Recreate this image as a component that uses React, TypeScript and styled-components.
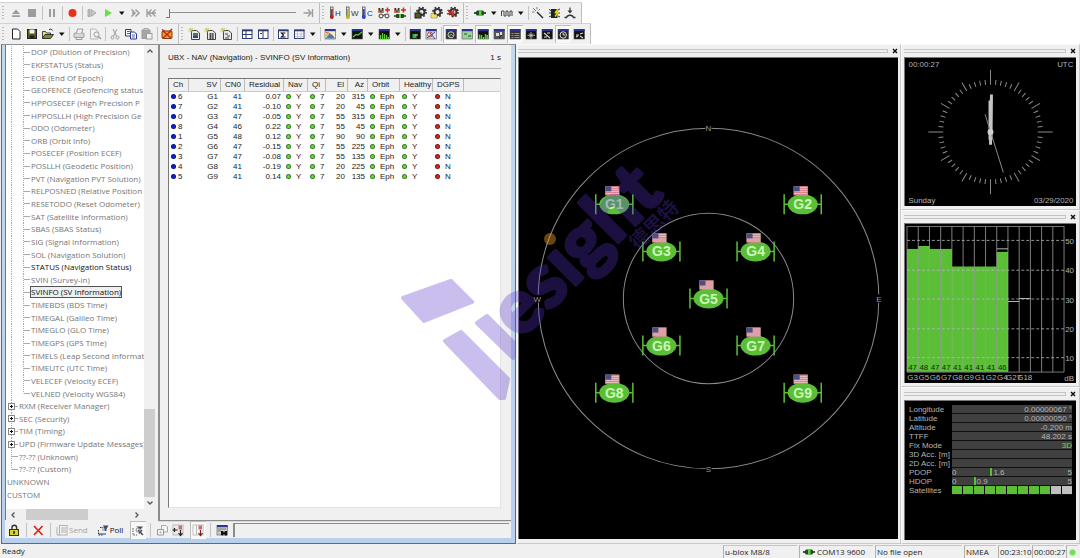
import React from "react";
import styled, { createGlobalStyle, css } from "styled-components";

const NARROW = '"Liberation Sans", Arial, sans-serif';
const UI = '"Open Sans", "Noto Sans", sans-serif';
const GREEN = "#5abf36";

const GlobalStyle = createGlobalStyle`
  * { box-sizing: border-box; }
  html, body { margin: 0; padding: 0; background: #fff; }
  body { font-family: ${UI}; font-size: 8px; line-height: 12px; color: #222; }
  button { font: inherit; color: inherit; }
  ul { list-style: none; margin: 0; padding: 0; }
`;

const Window = styled.div`
  display: flex;
  flex-direction: column;
  min-height: 100vh;
  background: #f0f0f0;
`;

/* ---------- toolbars ---------- */

const Toolbars = styled.header`
  display: flex;
  flex-direction: column;
  align-items: flex-start;
  padding-top: 2px;
  background: #fff;
`;

const ToolbarRow = styled.div`
  display: flex;
  height: 21px;
  background: #f0f0f0;
  border-top: 1px solid #d2d2d2;
`;

const Group = styled.div`
  display: flex;
  align-items: center;
  padding: 0 3px 0 2px;
  border-right: 1px solid #bdbdbd;
`;

const Grip = styled.span`
  width: 2px;
  height: 14px;
  margin-right: 4px;
  background: repeating-linear-gradient(#bbb 0 1px, transparent 1px 3px);
`;

const ToolButton = styled.button<{ $pressed?: boolean }>`
  display: flex;
  align-items: center;
  justify-content: center;
  flex: none;
  width: 16px;
  height: 18px;
  padding: 0;
  border: 0;
  background: none;
  ${(p) =>
    p.$pressed &&
    css`
      background: #f8f8f8;
      box-shadow: inset 1px 1px 0 #bdbdbd;
    `}
`;

const CaretButton = styled(ToolButton)`
  width: 11px;
`;

const Separator = styled.span`
  flex: none;
  width: 1px;
  height: 14px;
  margin: 0 1px 0 2px;
  background: #c3c3c3;
`;

const PlaybackSlider = styled.input`
  appearance: none;
  width: 130px;
  height: 16px;
  margin: 0 4px 0 7px;
  background: linear-gradient(#8f8f8f, #8f8f8f) 0 7px / 100% 1px no-repeat;
  &::-webkit-slider-thumb {
    appearance: none;
    width: 4px;
    height: 9px;
    background: #f0f0f0;
    border-right: 1px solid #777;
    border-bottom: 1px solid #777;
  }
`;

const Glyph = ({ children, size = 16 }: { children: React.ReactNode; size?: number }) => (
  <svg width={size} height="16" viewBox={`0 0 ${size} 16`} aria-hidden="true">
    {children}
  </svg>
);

const G = "#9c9c9c";

const Win = ({ children, bg = "#111" }: { children?: React.ReactNode; bg?: string }) => (
  <>
    <rect x="3" y="3.5" width="10.5" height="9.5" fill={bg} stroke="#555" strokeWidth="0.6" />
    <rect x="3" y="3" width="10.5" height="2.2" fill="#2b3590" />
    {children}
  </>
);

const Page = ({ children }: { children?: React.ReactNode }) => (
  <>
    <path d="M4.5 4.5h5l3 2.5v6.5h-8z" fill="#e9e9e9" stroke="#444" />
    <path d="M2 2l4 4M6 2L2 6M4 1.500v5M1.500 4h5" stroke="#c8c84a" strokeWidth="0.8" />
    {children}
  </>
);

const Layout = ({ children }: { children?: React.ReactNode }) => (
  <>
    <rect x="3.500" y="4" width="9.500" height="8.500" fill="#fff" stroke="#2c3c74" />
    <path d="M3 4.500h10.500" stroke="#2c3c74" strokeWidth="1.600" />
    {children}
  </>
);

const Gear = ({ children }: { children?: React.ReactNode }) => (
  <>
    <circle cx="9.500" cy="7" r="3" fill="none" stroke="#333" strokeWidth="2" />
    <circle cx="9.500" cy="7" r="4.600" fill="none" stroke="#333" strokeWidth="1.600" strokeDasharray="1.800 1.800" />
    {children}
  </>
);

const Plug = () => (
  <>
    <path d="M2 8h12" stroke="#222" strokeWidth="1.600" />
    <rect x="4" y="5.500" width="8" height="5" rx="1.500" fill="#1d4d1b" />
    <rect x="7" y="5.500" width="2.500" height="5" fill="#5fd13c" />
  </>
);

const Thermo = ({ color, letter }: { color: string; letter: string }) => (
  <>
    <rect x="2.500" y="2" width="2.600" height="9" fill="#eee" stroke="#555" strokeWidth="0.800" />
    <path d="M3.800 4v8" stroke={color} strokeWidth="1.800" />
    <circle cx="3.800" cy="12" r="2" fill={color} />
    <text x="7" y="11" fontSize="8" fontFamily="Liberation Sans" fill="#333">
      {letter}
    </text>
  </>
);

const MPlus = ({ children }: { children?: React.ReactNode }) => (
  <>
    <text x="2" y="7.500" fontSize="7" fontWeight="700" fontFamily="Liberation Sans" fill="#222">
      M
    </text>
    <path d="M9 5h5M11.500 2.500v5" stroke="#d6281c" strokeWidth="1.500" />
    {children}
  </>
);

const icons: Record<string, React.ReactNode> = {
  eject: <path d="M4 9l4-4.500 4 4.500zM4 10.300h8v1.700H4z" fill={G} />,
  stop: <rect x="4" y="4" width="8" height="8" fill={G} />,
  pause: <path d="M5 4h2v8H5zM9 4h2v8H9z" fill={G} />,
  record: <circle cx="8.500" cy="8" r="4" fill="#e8301c" />,
  step: <path d="M4 4.500h1.800v7H4zM7 4.500l5 3.500-5 3.500z" fill="#c9c9c9" stroke={G} strokeWidth="0.800" />,
  play: <path d="M5 4l7 4-7 4z" fill="#5fe536" />,
  forward: <path d="M4.500 4.500l3.500 3.500-3.500 3.500M5 8h3M8.500 4.500L12 8l-3.500 3.500" fill="none" stroke={G} strokeWidth="1.500" />,
  back: <path d="M4 4v8M8.500 4.500L5 8l3.500 3.500M12.500 4.500L9 8l3.500 3.500M6 8h7" fill="none" stroke={G} strokeWidth="1.300" />,
  end: <path d="M12.500 4v8M8 4.500L11 8l-3 3.500M3.500 8H11" fill="none" stroke={G} strokeWidth="1.400" />,
  hot: <Thermo color="#b52222" letter="H" />,
  warm: <Thermo color="#b5b52c" letter="W" />,
  cold: <Thermo color="#2e45c4" letter="C" />,
  addMsg: (
    <MPlus>
      <circle cx="5" cy="11" r="2" fill="none" stroke="#333" />
      <circle cx="11" cy="11" r="2" fill="none" stroke="#333" />
      <path d="M7 10.500l2-1" stroke="#333" />
    </MPlus>
  ),
  addPort: (
    <MPlus>
      <path d="M2 11h12" stroke="#222" strokeWidth="1.400" />
      <rect x="4" y="9" width="8" height="4" rx="1" fill="#1d4d1b" />
      <rect x="7" y="9" width="2" height="4" fill="#5fd13c" />
    </MPlus>
  ),
  gearSave: (
    <Gear>
      <rect x="3" y="8" width="6" height="5" fill="#55552a" stroke="#222" />
    </Gear>
  ),
  gearOpen: (
    <Gear>
      <path d="M3 8.500h2.500l1 1H9v3.500H3z" fill="#f3e36a" stroke="#9a8b2c" strokeWidth="0.600" />
    </Gear>
  ),
  gearClear: (
    <Gear>
      <path d="M3.500 5l7 6M3 9l6-2M9.500 4v8" stroke="#d22a20" strokeWidth="1.500" />
    </Gear>
  ),
  plug: <Plug />,
  pulse: <path d="M2.500 11V6h2.500v5h2V6h2v5h2V6h2v5" fill="none" stroke="#444" />,
  wand: (
    <>
      <path d="M7 7l6 6" stroke="#333" strokeWidth="1.500" />
      <path d="M3 3l3 3M7 2v2.500M2 7h2.500M10 4L8.500 5.500" stroke="#8a7b5c" />
    </>
  ),
  chip: (
    <>
      <rect x="5" y="4" width="6.500" height="9" fill="#222" />
      <path d="M3 4.500l2 1M3 8h2M3 12l2-1M12 5l2-1M12 8h2M12 11l2 1" stroke="#333" />
      <path d="M11.500 4.500l-2 3h2.500l-3 4" stroke="#e6d52c" strokeWidth="1.500" fill="none" />
    </>
  ),
  download: (
    <>
      <path d="M8 2.500v4" stroke="#333" strokeWidth="1.200" />
      <path d="M5.500 5.500h5L8 8.500z" fill="#333" />
      <path d="M2.500 12.500h2c1-3 6-3 7 0h2" fill="none" stroke="#333" strokeWidth="1.300" />
    </>
  ),
  newFile: <path d="M4.500 3h5l2.500 2.500V13H4.500z" fill="#fff" stroke="#222" />,
  save: (
    <>
      <rect x="3.500" y="3.500" width="9" height="9" fill="#5c5c1e" stroke="#222" />
      <rect x="5.500" y="3.500" width="5" height="4" fill="#eee" />
      <rect x="5.500" y="9.500" width="5" height="3" fill="#222" />
    </>
  ),
  open: (
    <>
      <path d="M2.500 12.500v-7h3l1 1.500h4v2" fill="#e8e07a" stroke="#444" />
      <path d="M2.500 12.500l2.500-4h8.500l-3 4z" fill="#8a8a28" stroke="#333" />
      <path d="M9 4c1-1.500 3-1 3.500.5" fill="none" stroke="#333" />
    </>
  ),
  print: (
    <>
      <rect x="3" y="7" width="10" height="4.500" rx="1" fill="#d8d8d8" stroke={G} />
      <path d="M5.500 7l1-4H12l-1.500 4M5 11.500h6v2H5z" fill="#f2f2f2" stroke={G} />
    </>
  ),
  preview: (
    <>
      <path d="M3.500 3h5l2.500 2.500V13H3.500z" fill="#f2f2f2" stroke="#b5b5b5" />
      <circle cx="9.500" cy="8.500" r="2.500" fill="#eee" stroke={G} />
      <path d="M11.500 10.500l2.500 2.500" stroke={G} strokeWidth="1.400" />
    </>
  ),
  cut: (
    <>
      <path d="M6 3l3.500 7M10 3L6.500 10" stroke={G} />
      <circle cx="5.500" cy="11.500" r="1.500" fill="none" stroke={G} />
      <circle cx="10.500" cy="11.500" r="1.500" fill="none" stroke={G} />
    </>
  ),
  copy: (
    <>
      <path d="M2.500 3.500H8v6.500H2.500z" fill="#fff" stroke="#2c3590" />
      <path d="M7.500 6h4l2 2v5h-6z" fill="#fff" stroke="#2c3590" />
      <path d="M4 5.500h3M4 7.500h3M9 9h3M9 11h3" stroke="#2c3590" strokeWidth="0.800" />
    </>
  ),
  paste: (
    <>
      <rect x="3" y="4" width="8" height="8.500" fill="#a6a6a6" stroke={G} />
      <rect x="5" y="2.500" width="4" height="2" fill="#ccc" stroke={G} strokeWidth="0.700" />
      <rect x="7.500" y="7.500" width="5.500" height="5.500" fill="#f2f2f2" stroke={G} />
    </>
  ),
  clear: (
    <>
      <rect x="3" y="5" width="10" height="7.500" rx="1" fill="#e8a32c" stroke="#7c3a10" />
      <path d="M4 5l8 7M12 5l-8 7M3 3.500l3 2M13 3l-3 3" stroke="#c9241a" strokeWidth="1.500" />
    </>
  ),
  pageImg: (
    <Page>
      <rect x="6" y="7" width="5" height="3" fill="#2c8a3a" />
      <rect x="6" y="10" width="5" height="2" fill="#3a3a9a" />
    </Page>
  ),
  pageTable: (
    <Page>
      <path d="M6 8h5M6 10h5M6 12h5M7.500 7v6M9.800 7v6" stroke="#333" strokeWidth="0.800" />
    </Page>
  ),
  pageText: (
    <Page>
      <path d="M6 8h3M8 10h3M6 12h4" stroke="#444" />
    </Page>
  ),
  layoutA: <Layout><path d="M7 5v7M7 8.500h6M4 8.500h3" stroke="#2c3c74" /></Layout>,
  layoutB: <Layout><path d="M8 5v7.500M5 7.500h2" stroke="#2c3c74" /></Layout>,
  sigma: (
    <Layout>
      <path d="M10.500 7H6.500L8.500 9l-2 2h4" fill="none" stroke="#111" strokeWidth="1.200" />
    </Layout>
  ),
  grid: <Layout><path d="M6.500 5v7.500M10 5v7.500M4 8h9M4 10.500h9" stroke="#a8b0c4" strokeWidth="0.700" /></Layout>,
  mapView: (
    <Win bg="#f3efc9">
      <path d="M3.500 12.500l4-5 3 2 2.500 3z" fill="#3a7fd0" />
      <path d="M4 6.500l4 1 4 4" stroke="#d0452c" fill="none" />
      <path d="M4 10l3-3" stroke="#e2b32c" strokeWidth="1.500" />
    </Win>
  ),
  lineView: <Win><path d="M4 11l3-2.500 2 .5 4-3" stroke="#56cc34" fill="none" strokeWidth="1.200" /></Win>,
  histView: <Win><path d="M4.500 13V9M6.500 13V7M8.500 13V8M10.500 13V9M12.300 13v-2" stroke="#56cc34" strokeWidth="1.300" /></Win>,
  consoleView: <Win><path d="M5.500 8h4v4h-4z" fill="#36b03a" /><path d="M8 9h3" stroke="#b4e4b4" /></Win>,
  chartView: (
    <Win bg="#ddd">
      <circle cx="7" cy="8.500" r="2.500" fill="none" stroke="#c24a4a" />
      <path d="M7 7l5 6M4 12l8-6" stroke="#3a4ab0" />
    </Win>
  ),
  sky: <Win bg="#333"><circle cx="8" cy="8.800" r="3" fill="none" stroke="#ccc" /><path d="M6 11l2-3 3 3" stroke="#56cc34" fill="none" /></Win>,
  world: <Win bg="#9fcf9f"><path d="M5 7h3v2H5zM9 9h3v2H9z" fill="#4e9a55" /></Win>,
  bars: <Win><path d="M4.500 13V8.500M6.500 13V9M8.500 13v-2M10.500 13V8M12.300 13V9" stroke="#56cc34" strokeWidth="1.500" /></Win>,
  dev: <Win bg="#555"><path d="M5 7h3v3H5zM9 6h2v3H9z" fill="#ddd" /><path d="M8 12l3-3" stroke="#222" /></Win>,
  data: <Win bg="#333"><path d="M4.500 7.500h2M7.500 7.500h5M4.500 9.500h2M7.500 9.500h5M4.500 11.500h2M7.500 11.500h5" stroke="#9a9a9a" strokeWidth="0.900" /></Win>,
  compass: <Win><path d="M8 6v7M4.500 9.300h7.500M6 7.500l4 4M10 7.500l-4 4" stroke="#ccc" strokeWidth="0.900" /></Win>,
  gauge: <Win><path d="M5 7l6 5M11 7H8M5 11h3" stroke="#ddd" strokeWidth="1.200" /></Win>,
  clock: <Win bg="#222"><circle cx="8.200" cy="9" r="3.200" fill="none" stroke="#ddd" /><path d="M8.200 7v2h1.800" stroke="#ddd" fill="none" /></Win>,
  speed: <Win><path d="M5 9h3M9 8l3-1M9 10l3 2M5 11l2-1" stroke="#ddd" strokeWidth="1.200" /></Win>,
  lock: (
    <>
      <path d="M6 8V5.500a2.300 2.300 0 0 1 4.600 0V8" fill="none" stroke="#333" strokeWidth="1.400" />
      <rect x="3.500" y="7.500" width="9" height="6" fill="#d6d62a" stroke="#33330a" />
      <path d="M8 9v3" stroke="#222" strokeWidth="1.500" />
    </>
  ),
  remove: <path d="M4 4l8.500 9M12.500 4L4 13" stroke="#d8231a" strokeWidth="1.700" />,
  send: (
    <>
      <rect x="5.500" y="3.500" width="7.500" height="9.500" fill="#f4f4f4" stroke="#b0b0b0" />
      <path d="M7 6h5M7 8h5M7 10h5M3 5v8h3" stroke="#b0b0b0" fill="none" />
    </>
  ),
  poll: (
    <>
      <path d="M3.500 8v5h4M5 5.500h3v3" fill="none" stroke="#333" strokeDasharray="1.500 1" />
      <path d="M8 3.500h5.500l-2 3.500v2H9.500V7z" fill="#3c4b6e" />
      <path d="M4 12h7" stroke="#223a8c" />
    </>
  ),
  pollAuto: (
    <>
      <path d="M3 6v7h4" fill="none" stroke="#555" strokeDasharray="1.500 1" />
      <path d="M6 4.500h7l-2.500 3z" fill="#444c5a" />
      <path d="M8 8l5 5M12 8l-3 3.500" stroke="#444c5a" strokeWidth="1.500" />
      <circle cx="8" cy="8" r="2" fill="none" stroke="#888" />
    </>
  ),
  pages: (
    <>
      <path d="M7.500 3.500h4.500l1.500 1.500v5h-6z" fill="#f4f4f4" stroke="#aaa" />
      <path d="M3.500 7.500h6v5.500h-6z" fill="#f4f4f4" stroke="#999" />
      <circle cx="6.500" cy="10.300" r="1" fill="#aaa" />
    </>
  ),
  moveCol: (
    <>
      <rect x="3" y="3" width="10" height="10" fill="#eaeaea" stroke="#aaa" strokeWidth="0.700" />
      <rect x="8.500" y="3.500" width="3.500" height="4" fill="#cf6b6b" />
      <path d="M2.500 8h5M4.500 6v4M10.500 8v5M8.500 11l2 2.500 2-2.500" stroke="#222" strokeWidth="1.200" fill="none" />
    </>
  ),
  dropCol: (
    <>
      <rect x="3" y="3" width="10" height="10" fill="#fbfbfb" stroke="#aaa" strokeWidth="0.700" />
      <path d="M6.500 3v10" stroke="#bbb" />
      <rect x="8.500" y="3.500" width="3.500" height="4" fill="#cf6b6b" />
      <path d="M10.500 8v5M8.500 11l2 2.500 2-2.500" stroke="#7a1c1c" strokeWidth="1.200" fill="none" />
    </>
  ),
  find: (
    <Win bg="#ccc">
      <path d="M7 13v-4h2l1 1.500L11 9h2v4.500h-2L10 12l-1 1.500z" fill="#111" />
      <path d="M4 7h8M4 9h3" stroke="#555" strokeWidth="0.700" />
    </Win>
  ),
};

type Item = string;

const playGroup: Item[] = ["eject", "stop", "|", "pause", "|", "record", "|", "step", "play", "v", "forward", "back", "~", "end"];
const actionGroup: Item[] = ["hot", "warm", "cold", "addMsg", "addPort", "|", "gearSave", "gearOpen", "gearClear"];
const portGroup: Item[] = ["plug", "v", "pulse", "v", "|", "wand", "chip", "download"];
const fileGroup: Item[] = ["newFile", "save", "open", "v", "|", "print", "preview", "|", "cut", "copy", "paste", "|", "clear"];
const viewGroup: Item[] = [
  "pageImg", "pageTable", "pageText", "|", "layoutA", "layoutB", "|", "sigma", "grid", "v", "|",
  "mapView", "v", "lineView", "v", "histView", "v", "|", "consoleView", "chartView", "|",
  "sky*", "world", "bars*", "dev", "data*", "compass", "gauge", "clock*", "speed",
];

function ToolGroup({ items }: { items: Item[] }) {
  return (
    <Group role="group">
      <Grip />
      {items.map((item, i) => {
        if (item === "|") return <Separator key={i} />;
        if (item === "~")
          return <PlaybackSlider key={i} type="range" min={0} max={100} defaultValue={0} aria-label="Playback position" />;
        if (item === "v")
          return (
            <CaretButton key={i} aria-label="More options">
              <Glyph size={7}>
                <path d="M1 6.500h5.500L3.800 10z" fill="#111" />
              </Glyph>
            </CaretButton>
          );
        const name = item.replace("*", "");
        return (
          <ToolButton key={i} aria-label={name} $pressed={item.endsWith("*")}>
            <Glyph>{icons[name]}</Glyph>
          </ToolButton>
        );
      })}
    </Group>
  );
}

/* ---------- workspace ---------- */

const Workspace = styled.main`
  position: relative;
  flex: 1;
  display: grid;
  grid-template-columns: 517fr 384fr 179fr;
  min-height: 480px;
`;

const MessageWindow = styled.section`
  display: flex;
  flex-direction: column;
  min-width: 0;
  margin: 0 1px;
  padding: 0 4px 5px 3px;
  background: linear-gradient(#c3d9f0, #b9d0ec);
  border: 1px solid #44738a;
  border-top: 1px solid #909090;
`;

const MessageBody = styled.div`
  flex: 1;
  display: flex;
  gap: 3px;
  min-width: 0;
  background: #f0f0f0;
`;

const TreePane = styled.nav`
  display: flex;
  flex-direction: column;
  width: 150px;
  border-left: 1px solid #777;
  background: #f0f0f0;
`;

const TreeArea = styled.div`
  flex: 1;
  display: flex;
`;

const Tree = styled.ul`
  flex: 1;
  min-width: 0;
  display: grid;
  grid-auto-rows: 1fr;
  padding: 1px 0 8px;
  overflow: hidden;
  background: #fff;
  color: #757575;
`;

const LINE = "#a9a9a9";

const TreeRow = styled.li<{ $level: number; $last?: boolean }>`
  position: relative;
  display: flex;
  align-items: center;
  min-height: 0;
  height: 100%;
  line-height: 12px;
  white-space: nowrap;
  padding-left: ${(p) => p.$level * 12}px;
  ${(p) =>
    p.$level > 0 &&
    css`
      background:
        ${p.$level === 2 ? `repeating-linear-gradient(${LINE} 0 1px, transparent 1px 2px) 5px 0 / 1px 100% no-repeat,` : ""}
        repeating-linear-gradient(${LINE} 0 1px, transparent 1px 2px) ${p.$level * 12 - 7}px 0 / 1px ${p.$last ? "50%" : "100%"} no-repeat,
        linear-gradient(${LINE}, ${LINE}) ${p.$level * 12 - 6}px 50% / 6px 1px no-repeat;
    `}
`;

const TreeLabel = styled.span<{ $tone?: "active" | "selected" }>`
  padding: 0 1px;
  color: ${(p) => (p.$tone ? "#111" : "inherit")};
  ${(p) =>
    p.$tone === "selected" &&
    css`
      background: #efefef;
      outline: 1px solid #555;
      outline-offset: -1px;
    `}
`;

const Expander = styled.button`
  position: absolute;
  left: 2px;
  display: flex;
  width: 7px;
  height: 7px;
  padding: 0;
  border: 1px solid #888;
  background:
    linear-gradient(#111, #111) 50% 50% / 3px 1px no-repeat,
    linear-gradient(#111, #111) 50% 50% / 1px 3px no-repeat,
    #fff;
`;

const VScroll = styled.div`
  display: flex;
  flex-direction: column;
  align-items: center;
  width: 11px;
`;

const VThumb = styled.span`
  width: 100%;
  height: 19%;
  margin-top: auto;
  background: #cdcdcd;
`;

const HScroll = styled.div`
  display: flex;
  height: 11px;
  margin-right: 11px;
`;

const HThumb = styled.span`
  width: 62px;
  margin: 0 auto 0 6px;
  background: #cdcdcd;
`;

const ScrollButton = styled.button`
  display: flex;
  align-items: center;
  justify-content: center;
  width: 12px;
  height: 12px;
  margin: 0 1px;
  padding: 0;
  border: 0;
  background: none;
`;

const treeData: [number, string, ("active" | "selected")?][] = [
  [2, "DOP (Dilution of Precision)"],
  [2, "EKFSTATUS (Status)"],
  [2, "EOE (End Of Epoch)"],
  [2, "GEOFENCE (Geofencing status"],
  [2, "HPPOSECEF (High Precision P"],
  [2, "HPPOSLLH (High Precision Ge"],
  [2, "ODO (Odometer)"],
  [2, "ORB (Orbit Info)"],
  [2, "POSECEF (Position ECEF)"],
  [2, "POSLLH (Geodetic Position)"],
  [2, "PVT (Navigation PVT Solution)"],
  [2, "RELPOSNED (Relative Position"],
  [2, "RESETODO (Reset Odometer)"],
  [2, "SAT (Satellite Information)"],
  [2, "SBAS (SBAS Status)"],
  [2, "SIG (Signal Information)"],
  [2, "SOL (Navigation Solution)"],
  [2, "STATUS (Navigation Status)", "active"],
  [2, "SVIN (Survey-in)"],
  [2, "SVINFO (SV Information)", "selected"],
  [2, "TIMEBDS (BDS Time)"],
  [2, "TIMEGAL (Galileo Time)"],
  [2, "TIMEGLO (GLO Time)"],
  [2, "TIMEGPS (GPS Time)"],
  [2, "TIMELS (Leap Second Informat"],
  [2, "TIMEUTC (UTC Time)"],
  [2, "VELECEF (Velocity ECEF)"],
  [2, "VELNED (Velocity WGS84)"],
  [1, "RXM (Receiver Manager)"],
  [1, "SEC (Security)"],
  [1, "TIM (Timing)"],
  [1, "UPD (Firmware Update Messages)"],
  [1, "??-?? (Unknown)"],
  [1, "??-?? (Custom)"],
  [0, "UNKNOWN"],
  [0, "CUSTOM"],
];

const Chevron = ({ d }: { d: string }) => (
  <svg width="8" height="8" viewBox="0 0 8 8" aria-hidden="true">
    <path d={d} fill="none" stroke="#555" strokeWidth="1.300" />
  </svg>
);

/* A branch line ends where the next row is on another level. */
const isLast = (i: number) => (treeData[i + 1]?.[0] ?? 0) !== treeData[i][0];

function MessageTree() {
  return (
    <TreePane aria-label="Messages">
      <TreeArea>
        <Tree>
          {treeData.map(([level, label, tone], i) => (
            <TreeRow key={i} $level={level} $last={isLast(i)}>
              {level === 1 && !label.startsWith("?") && <Expander aria-label={`Expand ${label}`} />}
              <TreeLabel $tone={tone}>{label}</TreeLabel>
            </TreeRow>
          ))}
        </Tree>
        <VScroll>
          <ScrollButton aria-label="Scroll up">
            <Chevron d="M1.500 5.500L4 3l2.500 2.500" />
          </ScrollButton>
          <VThumb />
          <ScrollButton aria-label="Scroll down">
            <Chevron d="M1.500 2.500L4 5l2.500-2.500" />
          </ScrollButton>
        </VScroll>
      </TreeArea>
      <HScroll>
        <ScrollButton aria-label="Scroll left">
          <Chevron d="M5.500 1.500L3 4l2.500 2.500" />
        </ScrollButton>
        <HThumb />
        <ScrollButton aria-label="Scroll right">
          <Chevron d="M2.500 1.500L5 4 2.500 6.500" />
        </ScrollButton>
      </HScroll>
    </TreePane>
  );
}

const DetailPane = styled.div`
  flex: 1;
  min-width: 0;
  display: flex;
  flex-direction: column;
  padding: 7px 10px 12px 8px;
  border-left: 2px solid #8c8c8c;
  font-family: ${NARROW};
`;

const DetailTitle = styled.div`
  display: flex;
  justify-content: space-between;
  padding-bottom: 4px;
  border-bottom: 1px solid #b4b4b4;
`;

const ListBox = styled.div`
  flex: 1;
  margin-top: 9px;
  background: #fff;
  border: 1px solid #777;
  border-right-color: #e4e4e4;
  border-bottom-color: #e4e4e4;
`;

const SvTable = styled.table`
  width: 100%;
  table-layout: fixed;
  border-collapse: separate;
  border-spacing: 0;
  line-height: 10px;
`;

const HeadCell = styled.th<{ $align?: string }>`
  height: 13px;
  padding: 0 3px 0 4px;
  background: #f0f0f0;
  border-right: 1px solid #bbb;
  border-bottom: 1px solid #ccc;
  font-weight: 400;
  text-align: ${(p) => p.$align ?? "left"};
  white-space: nowrap;
  &:last-child {
    border-right: 0;
  }
`;

const Cell = styled.td<{ $align?: string }>`
  height: 10px;
  padding: 0 3px 0 2px;
  text-align: ${(p) => p.$align ?? "left"};
  white-space: nowrap;
`;

const Dot = styled.span<{ $color: string }>`
  display: inline-block;
  width: 5px;
  height: 5px;
  margin-right: ${(p) => (p.$color === "#0a22e0" ? 2 : 5)}px;
  vertical-align: 0;
  border-radius: 50%;
  border: 1px solid rgba(0, 0, 0, 0.45);
  background: ${(p) => p.$color};
`;

const columns: [string, number, string?][] = [
  ["Ch", 20],
  ["SV", 32, "right"],
  ["CN0", 24, "right"],
  ["Residual", 39, "right"],
  ["Nav", 24],
  ["Qi", 18],
  ["El", 22, "right"],
  ["Az", 20, "right"],
  ["Orbit", 32],
  ["Healthy", 33],
  ["DGPS", 31],
];

const satellites: [string, string, string, string, string, string][] = [
  ["6", "G1", "41", "0.07", "20", "315"],
  ["7", "G2", "41", "-0.10", "20", "45"],
  ["0", "G3", "47", "-0.05", "55", "315"],
  ["8", "G4", "46", "0.22", "55", "45"],
  ["1", "G5", "48", "0.12", "90", "90"],
  ["2", "G6", "47", "-0.15", "55", "225"],
  ["3", "G7", "47", "-0.08", "55", "135"],
  ["4", "G8", "41", "-0.19", "20", "225"],
  ["5", "G9", "41", "0.14", "20", "135"],
];

const LIME = "#63e03a";

function SvInfo() {
  return (
    <DetailPane>
      <DetailTitle>
        <span>UBX - NAV (Navigation) - SVINFO (SV Information)</span>
        <span>1 s</span>
      </DetailTitle>
      <ListBox>
        <SvTable>
          <colgroup>
            {columns.map(([name, width]) => (
              <col key={name} width={width} />
            ))}
            <col />
          </colgroup>
          <thead>
            <tr>
              {columns.map(([name, , align]) => (
                <HeadCell key={name} $align={align}>
                  {name}
                </HeadCell>
              ))}
              <HeadCell aria-hidden="true" />
            </tr>
          </thead>
          <tbody>
            {satellites.map(([ch, sv, cn0, residual, el, az]) => (
              <tr key={sv}>
                <Cell>
                  <Dot $color="#0a22e0" />
                  {ch}
                </Cell>
                <Cell $align="right">{sv}</Cell>
                <Cell $align="right">{cn0}</Cell>
                <Cell $align="right">{residual}</Cell>
                <Cell>
                  <Dot $color={LIME} />Y
                </Cell>
                <Cell>
                  <Dot $color={LIME} />7
                </Cell>
                <Cell $align="right">{el}</Cell>
                <Cell $align="right">{az}</Cell>
                <Cell>
                  <Dot $color={LIME} />Eph
                </Cell>
                <Cell>
                  <Dot $color={LIME} />Y
                </Cell>
                <Cell>
                  <Dot $color="#d8281e" />N
                </Cell>
              </tr>
            ))}
          </tbody>
        </SvTable>
      </ListBox>
    </DetailPane>
  );
}

const MessageToolbar = styled.div`
  display: flex;
  align-items: center;
  height: 16px;
  padding-left: 1px;
  background: #f0f0f0;
`;

const ToolSlot = styled.span`
  display: flex;
  align-items: center;
  margin: 0 2px;
`;

const LabelButton = styled.button<{ $disabled?: boolean }>`
  display: flex;
  align-items: center;
  height: 16px;
  padding: 0;
  border: 0;
  margin-right: 7px;
  background: none;
  color: ${(p) => (p.$disabled ? "#a5a5a5" : "#111")};
  svg {
    margin-right: -1px;
  }
`;

const StatusField = styled.output`
  flex: 1;
  height: 14px;
  margin: 0 2px 0 3px;
  border-left: 2px solid #8c8c8c;
  border-top: 1px solid #8c8c8c;
`;

const PaneRule = styled.div`
  height: 2px;
  margin-left: 153px;
  background: #8c8c8c;
  border-bottom: 1px solid #dcdcdc;
`;

const BodyFooter = styled.footer`
  background: #f0f0f0;
`;

/* ---------- docked panels ---------- */

const Dock = styled.section<{ $slim?: boolean }>`
  display: flex;
  flex-direction: column;
  min-width: 0;
  min-height: 0;
  padding: ${(p) => (p.$slim ? "0 2px 4px 0" : "0 3px 3px 2px")};
  border: 1px solid #fafafa;
  border-right-color: #c8c8c8;
  border-bottom-color: #c8c8c8;
`;

const DockBar = styled.header`
  display: flex;
  align-items: center;
  gap: 4px;
  height: 12px;
`;

const DockGrip = styled.span`
  flex: 1;
  height: 4px;
  border: 1px solid #c4c4c4;
  border-width: 1px 1px 1px 0;
`;

const CloseButton = styled.button`
  display: flex;
  width: 6px;
  height: 6px;
  padding: 0;
  border: 0;
  background: none;
`;

const Screen = styled.div`
  flex: 1;
  min-height: 0;
  display: flex;
  overflow: hidden;
  background: #000;
  color: #b4b4b4;
  font-family: ${NARROW};
  border-left: 1px solid #777;
  border-top: 1px solid #777;
`;

/* Size containment lets the drawing fill its panel without stretching it. */
const Canvas = styled.svg`
  flex: 1;
  contain: size;
  min-width: 0;
  font-family: ${NARROW};
  font-size: 8px;
`;

const SideColumn = styled.div`
  display: grid;
  grid-template-rows: 166fr 177fr 157fr;
  min-height: 0;
  min-width: 0;
`;

function Panel({ title, slim, children }: { title: string; slim?: boolean; children: React.ReactNode }) {
  return (
    <Dock aria-label={title} $slim={slim}>
      <DockBar>
        <DockGrip />
        <CloseButton aria-label={`Close ${title}`}>
          <svg width="6" height="6" viewBox="0 0 6 6" aria-hidden="true">
            <path d="M1 1l4 4M5 1L1 5" stroke="#111" strokeWidth="1.500" />
          </svg>
        </CloseButton>
      </DockBar>
      <Screen>{children}</Screen>
    </Dock>
  );
}

const skyPoints: [string, number, number][] = [
  ["G1", -94, -94],
  ["G2", 94, -94],
  ["G3", -47, -47],
  ["G4", 47, -47],
  ["G5", 0, 0],
  ["G6", -47, 47],
  ["G7", 47, 47],
  ["G8", -94, 94],
  ["G9", 94, 94],
];

function Flag() {
  return (
    <g>
      <rect x="-9" y="-18" width="14" height="9" fill="#f0d4d4" />
      <path d="M-9-17.500H5M-9-15.500H5M-9-13.500H5M-9-11.500H5M-9-9.500H5" stroke="#cf6a78" strokeWidth="1" />
      <rect x="-9" y="-18" width="6" height="5" fill="#4a4f86" />
    </g>
  );
}

function SkyView() {
  return (
    <Canvas viewBox="-189 -240 378 480" role="img" aria-label="Sky view">
      <circle r="170" fill="none" stroke="#8a8a8a" />
      <circle r="85" fill="none" stroke="#8a8a8a" />
      {[
        ["N", 0, -170],
        ["E", 170, 0],
        ["S", 0, 170],
        ["W", -171, 0],
      ].map(([t, x, y]) => (
        <g key={t}>
          <rect x={+x - 3} y={+y - 4} width="6" height="8" fill="#000" />
          <text x={x} y={+y + 3} textAnchor="middle" fill="#999">
            {t}
          </text>
        </g>
      ))}
      {skyPoints.map(([name, x, y]) => (
        <g key={name} transform={`translate(${x} ${y})`}>
          <path d="M-18.500-10v20M18.500-10v20M-18 0h36" stroke={GREEN} strokeWidth="1.500" />
          <ellipse rx="15" ry="10" fill={GREEN} />
          <Flag />
          <text y="5" textAnchor="middle" fontSize="14" fontWeight="700" fontFamily="Liberation Sans, sans-serif" fill="#c9f7b8">
            {name}
          </text>
        </g>
      ))}
    </Canvas>
  );
}

function Clock() {
  const ticks = Array.from({ length: 60 }, (_, i) => i);
  return (
    <Canvas viewBox="-85 -75 170 150" role="img" aria-label="Clock">
      {ticks.map((i) => (
        <path
          key={i}
          d={`M0-48V${i % 15 === 0 ? -63 : i % 5 === 0 ? -58 : -53}`}
          stroke="#8c8c8c"
          strokeWidth="1"
          transform={`rotate(${i * 6})`}
        />
      ))}
      <path d="M0 13L1-38" stroke="#c4c4c4" strokeWidth="3" />
      <path d="M0 8V-32" stroke="#c4c4c4" strokeWidth="4" />
      <path d="M-5.500-18L13 41" stroke="#8c8c8c" />
      <circle r="3" fill="#d0d0d0" />
      <g fill="#b4b4b4">
        <text x="-83" y="-66">00:00:27</text>
        <text x="84" y="-66" textAnchor="end">UTC</text>
        <text x="-83" y="72">Sunday</text>
        <text x="84" y="72" textAnchor="end">03/29/2020</text>
      </g>
    </Canvas>
  );
}

const signals: [string, number?][] = [
  ["G3", 47], ["G5", 48], ["G6", 47], ["G7", 47], ["G8", 41],
  ["G9", 41], ["G1", 41], ["G2", 41], ["G4", 46], ["G27"], ["G18"],
];

function SignalChart() {
  const step = 158 / 14;
  const yOf = (db: number) => 163.5 - 2.945 * db;
  return (
    <Canvas viewBox="0 0 170 160" role="img" aria-label="Satellite signal levels">
      {signals.map(([name, db], i) =>
        db ? <rect key={name} x={1 + i * step} y={yOf(db)} width={step} height={149 - yOf(db)} fill={GREEN} /> : null,
      )}
      {[10, 20, 30, 40, 50].map((db) => (
        <path key={db} d={`M1 ${Math.round(yOf(db)) + 0.5}H159`} stroke="#b8b8b8" strokeOpacity="0.8" strokeDasharray="3 2" />
      ))}
      {Array.from({ length: 15 }, (_, i) => (
        <path key={i} d={`M${1 + i * step} 2V149`} stroke="#a8a8a8" strokeOpacity="0.75" />
      ))}
      <path d="M1 2.500H159M1 149H159" stroke="#777" />
      <path d={`M${1 + 8 * step} 25h${step}M${1 + 9 * step} 78h${step}M${1 + 10 * step} 75h${step}`} stroke="#b8b8b8" />
      {signals.map(([name, db], i) => (
        <g key={name} textAnchor="middle">
          {db && (
            <text x={1 + (i + 0.5) * step} y="147" fill="#12300a">
              {db}
            </text>
          )}
          <text x={1 + (i + 0.5) * step} y="157" fill="#b4b4b4">
            {name}
          </text>
        </g>
      ))}
      <g fill="#b4b4b4" textAnchor="end">
        {[10, 20, 30, 40, 50].map((db) => (
          <text key={db} x="169" y={yOf(db) + 4}>
            {db}
          </text>
        ))}
        <text x="169" y="158">dB</text>
      </g>
    </Canvas>
  );
}

const DataList = styled.dl`
  flex: 1;
  display: grid;
  grid-template-columns: 43px 1fr;
  grid-auto-rows: 9px;
  align-content: start;
  margin: 0;
  padding: 4px 4px 0 4px;
  line-height: 9px;
`;

const DataName = styled.dt`
  white-space: nowrap;
`;

const DataValue = styled.dd<{ $accent?: boolean }>`
  position: relative;
  display: flex;
  justify-content: flex-end;
  margin: 0;
  background: #404040;
  border-bottom: 1px solid #111;
  color: ${(p) => (p.$accent ? LIME : "inherit")};
`;

const ScaleValue = styled(DataValue)`
  justify-content: space-between;
`;

const Marker = styled.span`
  position: absolute;
  border-left: 2px solid ${GREEN};
  padding-left: 1px;
  height: 8px;
`;

const Segments = styled(DataValue)`
  gap: 1px;
  background: #000;
`;

const Segment = styled.span<{ $on: boolean }>`
  flex: 1;
  background: ${(p) => (p.$on ? GREEN : "#c0c0c0")};
`;

function NavData() {
  return (
    <DataList>
      {[
        ["Longitude", "0.00000067 °"],
        ["Latitude", "0.00000050 °"],
        ["Altitude", "-0.200 m"],
        ["TTFF", "48.202 s"],
        ["Fix Mode", "3D"],
        ["3D Acc. [m]", ""],
        ["2D Acc. [m]", ""],
      ].map(([name, value]) => (
        <React.Fragment key={name}>
          <DataName>{name}</DataName>
          <DataValue $accent={value === "3D"}>{value}</DataValue>
        </React.Fragment>
      ))}
      {[
        ["PDOP", 1.6],
        ["HDOP", 0.9],
      ].map(([name, value]) => (
        <React.Fragment key={name}>
          <DataName>{name}</DataName>
          <ScaleValue>
            <span>0</span>
            <Marker style={{ left: `${(+value / 5) * 100}%` }}>{value}</Marker>
            <span>5</span>
          </ScaleValue>
        </React.Fragment>
      ))}
      <DataName>Satellites</DataName>
      <Segments>
        {Array.from({ length: 11 }, (_, i) => (
          <Segment key={i} $on={i < 9} />
        ))}
      </Segments>
    </DataList>
  );
}

/* ---------- brand watermark laid over the workspace ---------- */

const Watermark = styled.svg`
  position: absolute;
  left: 37%;
  top: 96px;
  width: 300px;
  height: 270px;
  pointer-events: none;
`;

function Brand() {
  return (
    <Watermark viewBox="400 140 300 270" role="img" aria-label="Tesight">
      <g opacity="0.32" fill="#5a32c8">
        <g stroke="#5a32c8" strokeWidth="4" strokeLinejoin="round">
          <path d="M403 298L451 281 472 302 424 321z" />
          <path d="M445 341L461 332 508 379 504 398 500 398z" />
          <path d="M477 323L487 316 514 343 513 358z" />
        </g>
        <text
          transform="translate(520 341) rotate(-45)"
          fontFamily="Lato, sans-serif"
          fontWeight="900"
          fontSize="76"
          stroke="#5a32c8"
          strokeWidth="3"
          strokeLinejoin="round"
        >
          esıght
        </text>
        <text
          transform="translate(638 251) rotate(-45)"
          fontFamily="Noto Sans CJK SC, sans-serif"
          fontWeight="700"
          fontSize="20"
        >
          德思特
        </text>
      </g>
      <circle cx="550" cy="239" r="6" fill="#e8982c" opacity="0.45" />
    </Watermark>
  );
}

/* ---------- status bar ---------- */

const StatusBar = styled.footer`
  display: flex;
  gap: 2px;
  height: 14px;
  padding: 1px 2px 0 2px;
  background: #f0f0f0;
`;

const StatusText = styled.span`
  flex: 1;
`;

const StatusCell = styled.span<{ $width: number }>`
  display: flex;
  align-items: center;
  flex: none;
  width: ${(p) => p.$width}px;
  padding-left: 1px;
  white-space: nowrap;
  border-left: 1px solid #b0b0b0;
  border-top: 1px solid #c4c4c4;
`;

const Led = styled.span`
  width: 7px;
  height: 7px;
  margin-left: 1px;
  border-radius: 50%;
  background: #6fdf55;
  border: 1px solid #a8e898;
`;

export default function App() {
  return (
    <Window>
      <GlobalStyle />
      <Toolbars>
        <ToolbarRow>
          <ToolGroup items={playGroup} />
          <ToolGroup items={actionGroup} />
          <ToolGroup items={portGroup} />
        </ToolbarRow>
        <ToolbarRow>
          <ToolGroup items={fileGroup} />
          <ToolGroup items={viewGroup} />
        </ToolbarRow>
      </Toolbars>
      <Workspace>
        <MessageWindow>
          <MessageBody>
            <MessageTree />
            <SvInfo />
          </MessageBody>
          <BodyFooter>
            <PaneRule />
            <MessageToolbar>
              <ToolButton aria-label="Lock"><Glyph>{icons.lock}</Glyph></ToolButton>
              <ToolSlot><Separator /></ToolSlot>
              <ToolButton aria-label="Delete"><Glyph>{icons.remove}</Glyph></ToolButton>
              <ToolSlot><Separator /></ToolSlot>
              <LabelButton $disabled>
                <Glyph>{icons.send}</Glyph>Send
              </LabelButton>
              <LabelButton>
                <Glyph>{icons.poll}</Glyph>Poll
              </LabelButton>
              <ToolButton $pressed aria-label="Auto poll"><Glyph>{icons.pollAuto}</Glyph></ToolButton>
              <ToolSlot><Separator /></ToolSlot>
              <ToolButton aria-label="Copy pages"><Glyph>{icons.pages}</Glyph></ToolButton>
              <ToolButton aria-label="Move column"><Glyph>{icons.moveCol}</Glyph></ToolButton>
              <ToolSlot />
              <ToolButton $pressed aria-label="Drop column"><Glyph>{icons.dropCol}</Glyph></ToolButton>
              <ToolSlot><Separator /></ToolSlot>
              <ToolButton aria-label="Find"><Glyph>{icons.find}</Glyph></ToolButton>
              <StatusField />
            </MessageToolbar>
          </BodyFooter>
        </MessageWindow>
        <Panel title="Sky view" slim><SkyView /></Panel>
        <SideColumn>
          <Panel title="Clock"><Clock /></Panel>
          <Panel title="Signal levels"><SignalChart /></Panel>
          <Panel title="Navigation data"><NavData /></Panel>
        </SideColumn>
        <Brand />
      </Workspace>
      <StatusBar>
        <StatusText>Ready</StatusText>
        <StatusCell $width={74}>u-blox M8/8</StatusCell>
        <StatusCell $width={74}>
          <Glyph><Plug /></Glyph>COM13 9600
        </StatusCell>
        <StatusCell $width={87}>No file open</StatusCell>
        <StatusCell $width={32}>NMEA</StatusCell>
        <StatusCell $width={32}>00:23:10</StatusCell>
        <StatusCell $width={32}>00:00:27</StatusCell>
        <StatusCell $width={12}><Led /></StatusCell>
      </StatusBar>
    </Window>
  );
}
